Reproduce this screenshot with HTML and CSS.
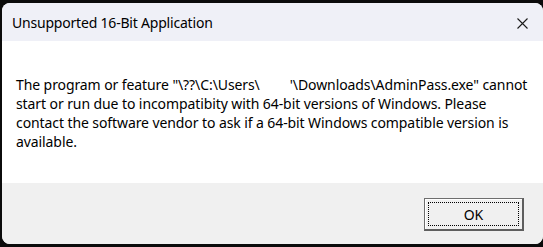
FILE: index.html
```html
<!DOCTYPE html>
<html lang="en">
<head>
    <meta charset="UTF-8">
    <title>Unsupported 16-Bit Application</title>
    <link rel="stylesheet" href="styles.css">
</head>
<body>
    <div class="window">
        <div class="titlebar">
            <span class="title">Unsupported 16-Bit Application</span>
            <span class="close">
                <svg width="11" height="11" viewBox="0 0 11 11">
                    <path d="M0.5 0.5 L10.5 10.5 M10.5 0.5 L0.5 10.5" stroke="#1b1b1b" stroke-width="1.1" fill="none"/>
                </svg>
            </span>
        </div>
        <div class="content">
            <p class="message">The program or feature "\??\C:\Users\<span class="redacted"></span>'\Downloads\AdminPass.exe" cannot<br>start or run due to incompatibity with 64-bit versions of Windows. Please<br>contact the software vendor to ask if a 64-bit Windows compatible version is<br>available.</p>
        </div>
        <div class="footer">
            <button class="btn"><span class="focus">OK</span></button>
        </div>
    </div>
</body>
</html>
```

FILE: styles.css
```css
body {
    margin: 0;
    background-color: #0b0b0b;
    font-family: 'Segoe UI', 'Noto Sans', sans-serif;
    font-size: 14px;
    color: #000;
}
.window {
    margin: 3px 0 0 2px;
    width: 541px;
    height: 241px;
    border-radius: 8px;
    overflow: hidden;
    display: flex;
    flex-direction: column;
    background-color: #fff;
}
.titlebar {
    height: 38px;
    flex-shrink: 0;
    background-color: #eff0f7;
    display: flex;
    align-items: center;
    justify-content: space-between;
    padding: 0 15px 0 10px;
}
.title {
    font-size: 14px;
    letter-spacing: -0.2px;
    margin-top: 1px;
}
.close {
    display: flex;
    margin-top: 3px;
}
.content {
    flex: 1;
    padding: 0 14px;
}
.message {
    margin: 34px 0 0 0;
    line-height: 19px;
    letter-spacing: -0.09px;
    white-space: nowrap;
}
.redacted {
    display: inline-block;
    width: 30px;
}
.footer {
    height: 61px;
    flex-shrink: 0;
    background-color: #f0f0f0;
    display: flex;
    justify-content: flex-end;
    align-items: flex-start;
    padding-right: 19px;
}
.btn {
    margin-top: 15px;
    width: 100px;
    height: 33px;
    padding: 3px;
    box-sizing: border-box;
    background-color: #f0f0f0;
    border: 1px solid #6e6e6e;
    border-right: 2px solid #5e5e5e;
    border-bottom: 2px solid #5e5e5e;
    box-shadow: inset 1px 1px 0 #fff;
    font-family: 'Segoe UI', 'Noto Sans', sans-serif;
    font-size: 14px;
    color: #000;
    display: flex;
}
.focus {
    flex: 1;
    border: 1px dotted #000;
    display: flex;
    align-items: center;
    justify-content: center;
}
```
